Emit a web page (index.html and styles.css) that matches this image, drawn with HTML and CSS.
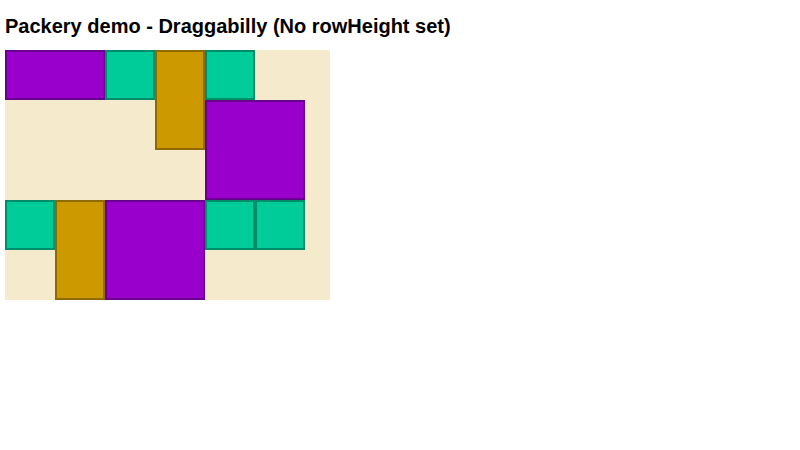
FILE: index.html
```html
<!DOCTYPE html>
<html>
<head>
<meta charset="utf-8">
<title>Packery demo</title>
<link rel="stylesheet" href="styles.css">
</head>
<body>
<h1 class="title">Packery demo - Draggabilly (No rowHeight set)</h1>
<div class="packery">
  <div class="item purple w2 c1 r1"></div>
  <div class="item teal c3 r1"></div>
  <div class="item gold h2 c4 r1"></div>
  <div class="item teal c5 r1"></div>
  <div class="item purple w2 h2 c5 r2"></div>
  <div class="item teal c1 r4"></div>
  <div class="item gold h2 c2 r4"></div>
  <div class="item purple w2 h2 c3 r4"></div>
  <div class="item teal c5 r4"></div>
  <div class="item teal c6 r4"></div>
</div>
</body>
</html>
```
FILE: styles.css
```css
html, body {
  background: #fff;
}
body {
  margin: 5px;
  font-family: "Liberation Sans", Arial, sans-serif;
}
.title {
  font-size: 20px;
  line-height: 23px;
  font-weight: bold;
  margin: 10px 0 12px;
  color: #000;
}
.packery {
  width: 325px;
  height: 250px;
  background: #F5EACB;
  display: grid;
  grid-template-columns: repeat(6, 50px);
  grid-template-rows: repeat(5, 50px);
}
.item {
  box-sizing: border-box;
  border: 2px solid hsla(0, 0%, 0%, 0.3);
  grid-column-end: span 1;
  grid-row-end: span 1;
}
.purple { background: #90C; }
.teal { background: #0C9; }
.gold { background: #C90; }
.c1 { grid-column-start: 1; }
.c2 { grid-column-start: 2; }
.c3 { grid-column-start: 3; }
.c4 { grid-column-start: 4; }
.c5 { grid-column-start: 5; }
.c6 { grid-column-start: 6; }
.r1 { grid-row-start: 1; }
.r2 { grid-row-start: 2; }
.r4 { grid-row-start: 4; }
.w2 { grid-column-end: span 2; }
.h2 { grid-row-end: span 2; }
```
